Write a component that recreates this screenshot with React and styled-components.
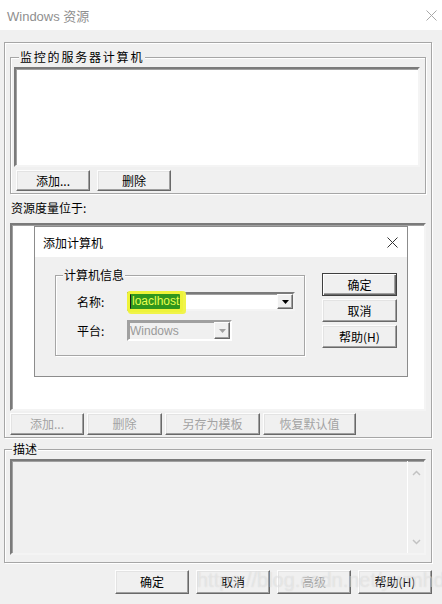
import React from 'react'
import styled, { createGlobalStyle, css } from 'styled-components'

const GlobalStyle = createGlobalStyle`
  html, body {
    margin: 0;
    padding: 0;
    background: #f0f0f0;
  }
  body {
    font-family: "Noto Sans CJK SC", "Liberation Sans", sans-serif;
    font-size: 12px;
    color: #000;
  }
  * { box-sizing: border-box; }
`

const Window = styled.div`
  position: relative;
  width: 442px;
  height: 604px;
  overflow: hidden;
  background: #f0f0f0;
`

const TitleBar = styled.div`
  height: 30px;
  background: #fff;
  display: flex;
  align-items: center;
  justify-content: space-between;
  padding: 0 5px 0 7px;
`

const TitleText = styled.span`
  font-family: "Liberation Sans", "Noto Sans CJK SC", sans-serif;
  font-size: 13px;
  color: #8f8f8f;
`

const Body = styled.div`
  padding: 12px 10px 0 4px;
`

const etched = css`
  border: 1px solid #a6a6a6;
  box-shadow: inset 1px 1px 0 #fff, 1px 1px 0 #fff;
`

const sunken = css`
  border-style: solid;
  border-width: 2px;
  border-color: #7a7a7a #f4f4f4 #f4f4f4 #7a7a7a;
  box-shadow: inset 1px 1px 0 #a0a0a0;
`

const OuterPanel = styled.div`
  ${etched};
  padding: 14px 5px 2px 5px;
`

const Group = styled.div`
  ${etched};
  position: relative;
  height: ${p => p.$h}px;
  padding: ${p => p.$pad};
`

const Legend = styled.span`
  position: absolute;
  top: -8px;
  left: ${p => p.$left ?? 7}px;
  padding: 0 1px;
  line-height: 14px;
  background: #f0f0f0;
  letter-spacing: ${p => p.$spacing ?? 0}px;
  white-space: nowrap;
`

const ListBox = styled.div`
  ${sunken};
  height: 100px;
  background: #fff;
`

const ButtonRow = styled.div`
  display: flex;
  gap: ${p => p.$gap}px;
  margin-top: ${p => p.$mt}px;
  padding-left: ${p => p.$pl ?? 0}px;
  justify-content: ${p => (p.$end ? 'flex-end' : 'flex-start')};
`

const Button = styled.button`
  width: ${p => p.$w}px;
  height: ${p => p.$h ?? 21}px;
  padding: 0;
  font-family: "Noto Sans CJK SC", "Liberation Sans", sans-serif;
  font-size: 12px;
  line-height: 1;
  color: ${p => (p.disabled ? '#a3a3a3' : '#000')};
  background: #f0f0f0;
  border-style: solid;
  border-width: 1px;
  border-color: #fdfdfd #696969 #696969 #fdfdfd;
  box-shadow: inset -1px -1px 0 #a0a0a0, inset 1px 1px 0 #e3e3e3;
  ${p =>
    p.$primary &&
    css`
      border-color: #3f3f3f;
      box-shadow: inset 1px 1px 0 #fff, inset -1px -1px 0 #696969, inset -2px -2px 0 #a0a0a0;
    `}
`

const MetricLabel = styled.div`
  margin-top: 6px;
  height: 16px;
  line-height: 16px;
  padding-left: 1px;
`

const WhiteBox = styled.div`
  ${sunken};
  margin-top: 7px;
  height: 188px;
  background: #fff;
  padding: 1px 0 0 22px;
`

const Dialog = styled.div`
  width: 374px;
  height: 151px;
  border: 1px solid #8c8c8c;
  background: #f0f0f0;
  display: flex;
  flex-direction: column;
`

const DialogTitle = styled.div`
  height: 30px;
  background: #fff;
  display: flex;
  align-items: center;
  justify-content: space-between;
  padding: 0 9px 0 8px;
`

const DialogBody = styled.div`
  display: flex;
  align-items: flex-start;
  padding: 16px 0 0 20px;
`

const InfoColumn = styled.div`
  margin-top: 2px;
  width: 250px;
`

const FieldRow = styled.div`
  display: flex;
  align-items: center;
  height: ${p => p.$h}px;
  margin-top: ${p => p.$mt}px;
`

const FieldLabel = styled.span`
  width: 50px;
  line-height: 14px;
`

const Combo = styled.div`
  ${sunken};
  position: relative;
  display: flex;
  align-items: center;
  width: ${p => p.$w}px;
  height: 100%;
  background: ${p => (p.$disabled ? '#f0f0f0' : '#fff')};
  border-color: ${p => (p.$disabled ? '#a0a0a0 #fff #fff #a0a0a0' : '#7a7a7a #f4f4f4 #f4f4f4 #7a7a7a')};
`

const ComboText = styled.span`
  flex: 1;
  padding-left: 1px;
  font-family: "Liberation Sans", sans-serif;
  font-size: 12px;
  color: ${p => (p.$disabled ? '#9a9a9a' : '#000')};
`

const Selected = styled.span`
  display: inline-block;
  padding: 1px 1px 2px;
  line-height: 12px;
  background: #2f961c;
  color: #e9ff4e;
  border-left: 1px solid #1a1a1a;
  border-radius: 1px;
  box-shadow: 0 0 0 3px #eef33a, 2px 1px 0 4px #f0f44a;
`

const DropButton = styled.span`
  width: 16px;
  height: 100%;
  display: flex;
  align-items: center;
  justify-content: center;
  background: #f0f0f0;
  border-style: solid;
  border-width: 1px;
  border-color: #fdfdfd #696969 #696969 #fdfdfd;
  box-shadow: inset -1px -1px 0 #a0a0a0;
`

const ActionColumn = styled.div`
  margin-left: 17px;
  display: flex;
  flex-direction: column;
  gap: 3px;
`

const BottomRow = styled(ButtonRow)`
  margin-top: 2px;
`

const DescGroup = styled(Group)`
  margin-top: 11px;
`

const DescBox = styled.div`
  ${sunken};
  height: 96px;
  display: flex;
  background: #f0f0f0;
`

const DescContent = styled.div`
  flex: 1;
`

const ScrollBar = styled.div`
  width: 17px;
  border-left: 1px solid #fff;
  display: flex;
  flex-direction: column;
  align-items: center;
  justify-content: space-between;
  padding: 9px 0 8px;
`

const Footer = styled(ButtonRow)`
  margin-top: 7px;
`

const Watermark = styled.div`
  position: absolute;
  left: 197px;
  top: 569px;
  font-family: "Liberation Sans", sans-serif;
  font-size: 20px;
  color: rgba(255, 255, 255, 0.35);
  text-shadow: 0 0 1px rgba(150, 150, 150, 0.3);
  white-space: nowrap;
  pointer-events: none;
`

const CloseIcon = ({ color = '#999', size = 11 }) => (
  <svg width={size} height={size} viewBox="0 0 11 11">
    <path d="M0.5 0.5 L10.5 10.5 M10.5 0.5 L0.5 10.5" stroke={color} strokeWidth="1" fill="none" />
  </svg>
)

const DownTriangle = ({ color = '#000' }) => (
  <svg width="7" height="4" viewBox="0 0 7 4">
    <path d="M0 0 H7 L3.5 4 Z" fill={color} />
  </svg>
)

const Chevron = ({ up }) => (
  <svg width="9" height="6" viewBox="0 0 9 6">
    <path d={up ? 'M1 5 L4.5 1.5 L8 5' : 'M1 1 L4.5 4.5 L8 1'} stroke="#c2c2c2" strokeWidth="1.5" fill="none" />
  </svg>
)

export default function App() {
  return (
    <>
      <GlobalStyle />
      <Window>
        <TitleBar>
          <TitleText>Windows 资源</TitleText>
          <CloseIcon color="#a8a8a8" />
        </TitleBar>

        <Body>
          <OuterPanel>
            <Group $h={137} $pad="9px 5px 0 3px">
              <Legend $left={8} $spacing={1.8}>监控的服务器计算机</Legend>
              <ListBox />
              <ButtonRow $gap={7} $mt={3} $pl={2}>
                <Button $w={74}>添加...</Button>
                <Button $w={74}>删除</Button>
              </ButtonRow>
            </Group>

            <MetricLabel>资源度量位于:</MetricLabel>

            <WhiteBox>
              <Dialog>
                <DialogTitle>
                  <span>添加计算机</span>
                  <CloseIcon color="#333" />
                </DialogTitle>
                <DialogBody>
                  <InfoColumn>
                    <Group $h={81} $pad="16px 9px 0 21px">
                      <Legend>计算机信息</Legend>
                      <FieldRow $h={19} $mt={0}>
                        <FieldLabel>名称:</FieldLabel>
                        <Combo $w={168}>
                          <ComboText>
                            <Selected>loaclhost</Selected>
                          </ComboText>
                          <DropButton>
                            <DownTriangle />
                          </DropButton>
                        </Combo>
                      </FieldRow>
                      <FieldRow $h={21} $mt={9}>
                        <FieldLabel>平台:</FieldLabel>
                        <Combo $w={105} $disabled>
                          <ComboText $disabled>Windows</ComboText>
                          <DropButton>
                            <DownTriangle color="#a0a0a0" />
                          </DropButton>
                        </Combo>
                      </FieldRow>
                    </Group>
                  </InfoColumn>
                  <ActionColumn>
                    <Button $w={75} $h={23} $primary>确定</Button>
                    <Button $w={75} $h={23}>取消</Button>
                    <Button $w={75} $h={23}>帮助(H)</Button>
                  </ActionColumn>
                </DialogBody>
              </Dialog>
            </WhiteBox>

            <BottomRow $gap={3}>
              <Button $w={74} $h={22} disabled>添加...</Button>
              <Button $w={75} $h={22} disabled>删除</Button>
              <Button $w={95} $h={22} disabled>另存为模板</Button>
              <Button $w={93} $h={22} disabled>恢复默认值</Button>
            </BottomRow>
          </OuterPanel>

          <DescGroup $h={114} $pad="9px 5px 0 5px">
            <Legend $left={7}>描述</Legend>
            <DescBox>
              <DescContent />
              <ScrollBar>
                <Chevron up />
                <Chevron />
              </ScrollBar>
            </DescBox>
          </DescGroup>

          <Footer $gap={7} $end>
            <Button $w={74} $h={24}>确定</Button>
            <Button $w={74} $h={24}>取消</Button>
            <Button $w={74} $h={24} disabled>高级</Button>
            <Button $w={74} $h={24}>帮助(H)</Button>
          </Footer>
        </Body>

        <Watermark>https://blog.csdn.net/ywmhdwywn</Watermark>
      </Window>
    </>
  )
}
